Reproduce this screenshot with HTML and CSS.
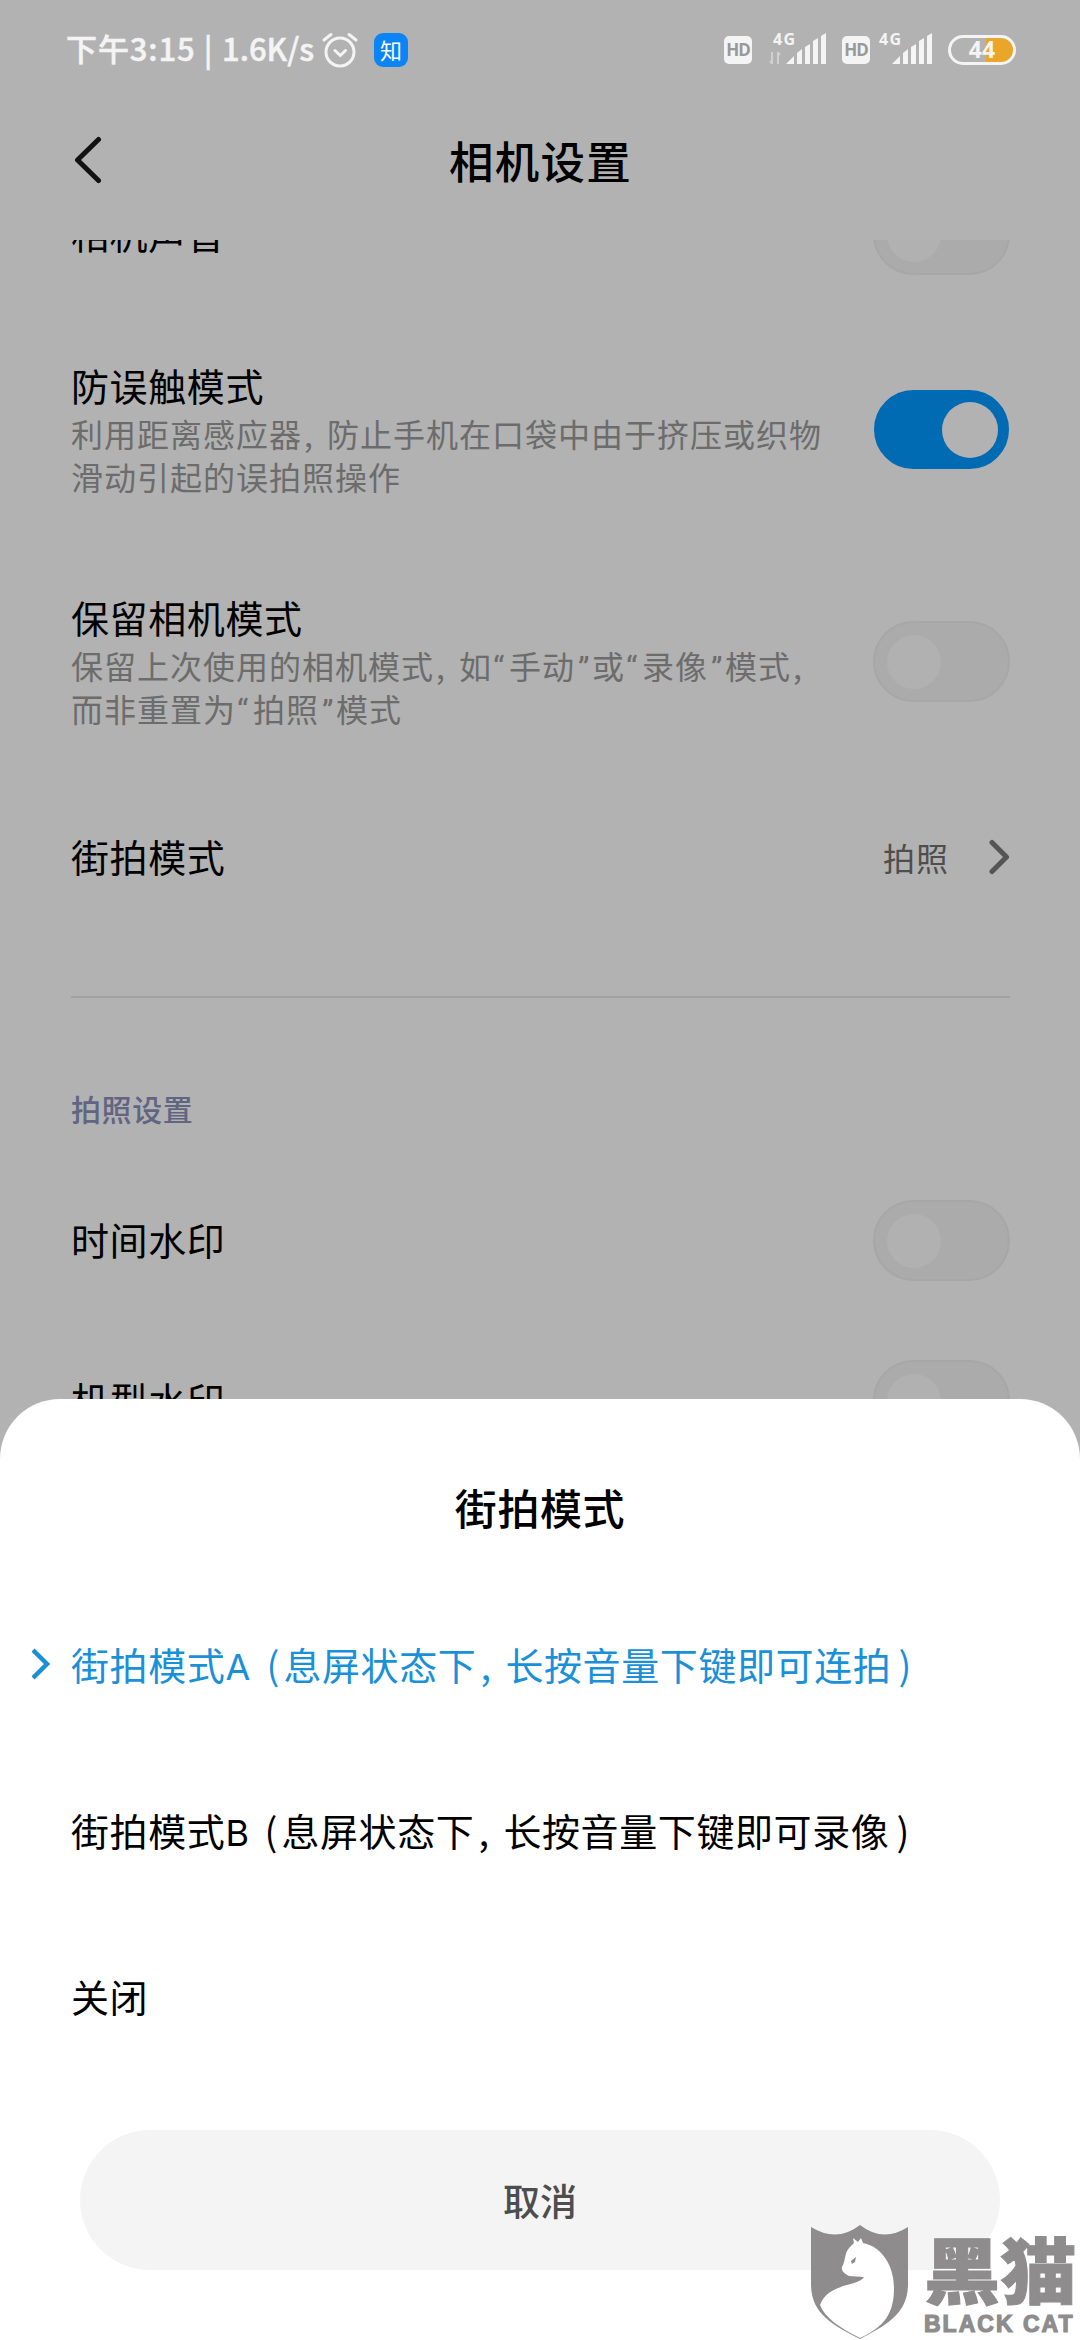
FILE: index.html
```html
<!DOCTYPE html>
<html lang="zh-CN">
<head>
<meta charset="utf-8">
<title>相机设置</title>
<link rel="stylesheet" href="styles.css">
</head>
<body>
<div class="screen">
  <header class="status">
    <span class="clock">下午3:15</span><span class="bar">|</span><span class="speed">1.6K/s</span>
    <svg class="alarm" width="36" height="36" viewBox="0 0 36 36" fill="none" stroke="#f4f4f4" stroke-width="3" stroke-linecap="round"><circle cx="18" cy="20" r="14"/><path d="M13 18.500l5.300 5 5.200-5M2 8l7-5.500M34 8l-7-5.500"/></svg>
    <span class="zhi">知</span>
    <div class="radios">
      <span class="hd">HD</span>
      <svg class="signal" width="56" height="34" viewBox="0 0 56 34"><text x="3" y="12.500" class="net" textLength="22">4G</text><path d="M2 20v12M2 32l-2-3M8 20v12M8 20l2 3" stroke="#d0d0d0" stroke-width="2" fill="none"/><g fill="#f4f4f4"><path d="M16 32l8-8v8zM27 21l5-4v15h-5zM35 15l5-3v20h-5zM43 9l5-3v26h-5zM51 4l5-3v31h-5z"/></g></svg>
      <span class="hd">HD</span>
      <svg class="signal second" width="56" height="34" viewBox="0 0 56 34"><text x="3" y="12.500" class="net" textLength="22">4G</text><g fill="#f4f4f4"><path d="M16 32l8-8v8zM27 21l5-4v15h-5zM35 15l5-3v20h-5zM43 9l5-3v26h-5zM51 4l5-3v31h-5z"/></g></svg>
      <span class="battery">44</span>
    </div>
  </header>
  <nav class="titlebar">
    <svg class="back" width="36" height="50" viewBox="0 0 36 50"><path d="M32.500 4.500L11.500 25l21 20.500" fill="none" stroke="#111" stroke-width="5" stroke-linecap="round" stroke-linejoin="round"/></svg>
    <h1>相机设置</h1>
  </nav>
  <main class="list">
    <section class="row r-sound"><div class="label">相机声音</div><i class="switch"></i></section>
    <section class="row r-touch"><div><div class="label">防误触模式</div><p>利用距离感应器<b class="c">,</b>防止手机在口袋中由于挤压或织物<br>滑动引起的误拍照操作</p></div><i class="switch on"></i></section>
    <section class="row r-keep"><div><div class="label">保留相机模式</div><p>保留上次使用的相机模式<b class="c">,</b>如<b class="q open">“</b>手动<b class="q">”</b>或<b class="q open">“</b>录像<b class="q">”</b>模式<b class="c">,</b><br>而非重置为<b class="q open">“</b>拍照<b class="q">”</b>模式</p></div><i class="switch"></i></section>
    <section class="row r-street"><div class="label">街拍模式</div><div class="value">拍照<svg width="24" height="38" viewBox="0 0 24 38"><path d="M6 4.500L20.500 19 6 33.500" fill="none" stroke="#555" stroke-width="5" stroke-linecap="round" stroke-linejoin="round"/></svg></div></section>
    <hr>
    <h2>拍照设置</h2>
    <section class="row r-mark"><div class="label">时间水印</div><i class="switch"></i></section>
    <section class="row r-mark"><div class="label">机型水印</div><i class="switch"></i></section>
  </main>
  <div class="sheet">
    <h3>街拍模式</h3>
    <ul>
      <li class="chosen"><svg width="20" height="34" viewBox="0 0 20 34"><path d="M1 3l14 14L1 31" fill="none" stroke="#1a90d9" stroke-width="4.500"/></svg>街拍模式<b class="la">A</b><b class="p">(</b>息屏状态下<b class="c">,</b>长按音量下键即可连拍<b class="p end">)</b></li>
      <li>街拍模式<b class="lb">B</b><b class="p">(</b>息屏状态下<b class="c">,</b>长按音量下键即可录像<b class="p end">)</b></li>
      <li>关闭</li>
    </ul>
    <button>取消</button>
  </div>
  <div class="watermark">
    <svg class="shield" width="98" height="116" viewBox="0 0 98 116"><path d="M1 3q26 16 49-2 23 18 48 2v57c0 30-22 41-48 55C23 101 1 90 1 60z" fill="#8e8c8d"/><path d="M43 14l5 4 3-4 2 5c20 4 31 24 31 45 0 26-10 39-34 50C30 104 15 94 10 81c5-14 19-18 34-22 5-2 8-3 10-6l-15-1c-4-2-8-5-7-9 4-7 2-13 7-19l5-5z" fill="#fff"/><path d="M41 37l5-4-1 5-3 2z" fill="#8e8c8d"/></svg>
    <div class="brand"><div class="cn">黑猫</div><div class="en">BLACK CAT</div></div>
  </div>
</div>
</body>
</html>
```
FILE: styles.css
```css
* { box-sizing: border-box; margin: 0; padding: 0; }
body { width: 1080px; height: 2340px; overflow: hidden; font-family: "Noto Sans CJK SC", sans-serif; }
.screen { position: relative; height: 2340px; background: #b2b2b2; overflow: hidden; color: #000; display: flex; flex-direction: column; }
b { font-weight: inherit; display: inline-block; letter-spacing: 0; }

.status { height: 100px; padding-left: 66px; display: flex; align-items: center; color: #f4f4f4; font-size: 31px; font-weight: 500; line-height: 40px; }
.clock, .bar, .speed { padding-bottom: 4px; white-space: nowrap; -webkit-text-stroke: .5px; }
.clock { width: 131px; letter-spacing: .9px; }
.bar { width: 22px; text-align: center; }
.speed { width: 101px; padding-left: 3px; }
.alarm { margin-left: 2px; flex: none; }
.zhi { margin-left: 16px; width: 34px; height: 34px; border-radius: 9px; background: #0b84f5; color: #fff; font-size: 22px; line-height: 32px; text-align: center; font-weight: 400; }
.radios { margin-left: auto; padding-right: 64px; display: flex; align-items: center; }
.hd { width: 28px; height: 28px; border-radius: 5px; background: #f4f4f4; color: #999; font: bold 17px/28px "Open Sans", sans-serif; text-align: center; letter-spacing: -1px; }
.signal { margin-left: 18px; margin-right: 16px; margin-bottom: 3px; overflow: visible; }
.signal.second { margin-left: 6px; }
.net { font: bold 16px "Open Sans", sans-serif; fill: #f4f4f4; }
.battery { width: 68px; height: 30px; border: 3px solid #f4f4f4; border-radius: 15px; background: linear-gradient(90deg, transparent 57%, #eaa52b 57%); font: bold 23px/23px "Open Sans", sans-serif; text-align: center; }

.titlebar { height: 140px; flex: none; display: flex; padding: 35px 66px; }
h1 { flex: 1; padding-right: 35px; text-align: center; font-size: 44.500px; font-weight: 500; line-height: 50px; letter-spacing: 1.300px; }

.list { height: 1160px; flex: none; overflow: hidden; padding: 0 70px 0 71px; }
.row { display: flex; justify-content: space-between; align-items: center; }
.label { font-size: 38px; line-height: 48px; letter-spacing: .6px; padding-bottom: 3px; }
.row p { font-size: 32px; line-height: 43px; letter-spacing: 1px; color: #6c6c6c; white-space: nowrap; }
.row p .c { width: 25px; padding-left: 2px; }
.q { width: 17px; font-family: Roboto, sans-serif; font-size: 32px; line-height: 30px; padding-left: 3px; }
.q.open { padding-left: 1px; }
.switch { width: 137px; height: 81px; border-radius: 41px; flex: none; background: #ababab; border: 2px solid #a7a7a7; padding: 12px; }
.switch::before { content: ""; display: block; width: 54px; height: 54px; border-radius: 50%; background: #b1b1b1; }
.switch.on { background: #006ab3; border-color: #006ab3; width: 135px; height: 79px; padding: 10px 9px; margin-right: 1px; }
.switch.on::before { width: 56px; height: 56px; margin-left: auto; background: #b2b2b2; }
.r-sound { height: 80px; margin-top: -46px; }
.r-touch { height: 231px; margin-top: 40px; }
.r-keep { height: 232px; }
.r-street { height: 160px; }
.value { display: flex; align-items: center; font-size: 32px; letter-spacing: 1px; color: #4e4e4e; }
.value svg { margin-left: 37px; }
hr { border: 0; height: 2px; background: #a2a2a2; margin-top: 59px; }
h2 { margin-top: 88px; height: 44px; font-size: 30px; line-height: 44px; font-weight: 500; letter-spacing: .6px; color: #626582; }
.r-mark { height: 160px; }
h2 + .r-mark { margin-top: 30px; }

.sheet { position: absolute; left: 0; right: 0; bottom: 0; height: 941px; border-radius: 60px 60px 0 0; background: #fff; display: flex; flex-direction: column; align-items: center; padding-top: 80px; }
h3 { font-size: 42px; font-weight: 500; line-height: 56px; letter-spacing: .6px; }
ul { list-style: none; align-self: stretch; margin-top: 46px; }
li { position: relative; height: 166px; padding-left: 71px; font-size: 38px; line-height: 166px; letter-spacing: .6px; white-space: nowrap; }
.chosen { color: #1a90d9; }
.chosen svg { position: absolute; left: 32px; top: 66px; }
li .c { width: 29px; padding-left: 4px; }
.la, .lb { font-family: Inter, sans-serif; font-size: 36px; line-height: 40px; }
.la { width: 28px; }
.lb { width: 26px; }
.p { width: 30px; padding-left: 13px; }
.p.end { padding-left: 7px; }
button { width: 920px; height: 140px; margin-top: 51px; border: 0; border-radius: 70px; background: #f4f4f4; color: #4d4d4d; font: 500 37px "Noto Sans CJK SC", sans-serif; }

.watermark { position: absolute; left: 810px; top: 2224px; display: flex; color: #8e8c8d; }
.brand { margin-left: 16px; width: 154px; }
.cn { height: 88px; font-size: 72px; line-height: 86px; font-weight: 900; transform: scaleX(1.06); transform-origin: left; white-space: nowrap; -webkit-text-stroke: 1px; }
.en { font: bold 23px/24px "Liberation Sans", sans-serif; white-space: nowrap; -webkit-text-stroke: 1.200px; letter-spacing: 2px; }
```
